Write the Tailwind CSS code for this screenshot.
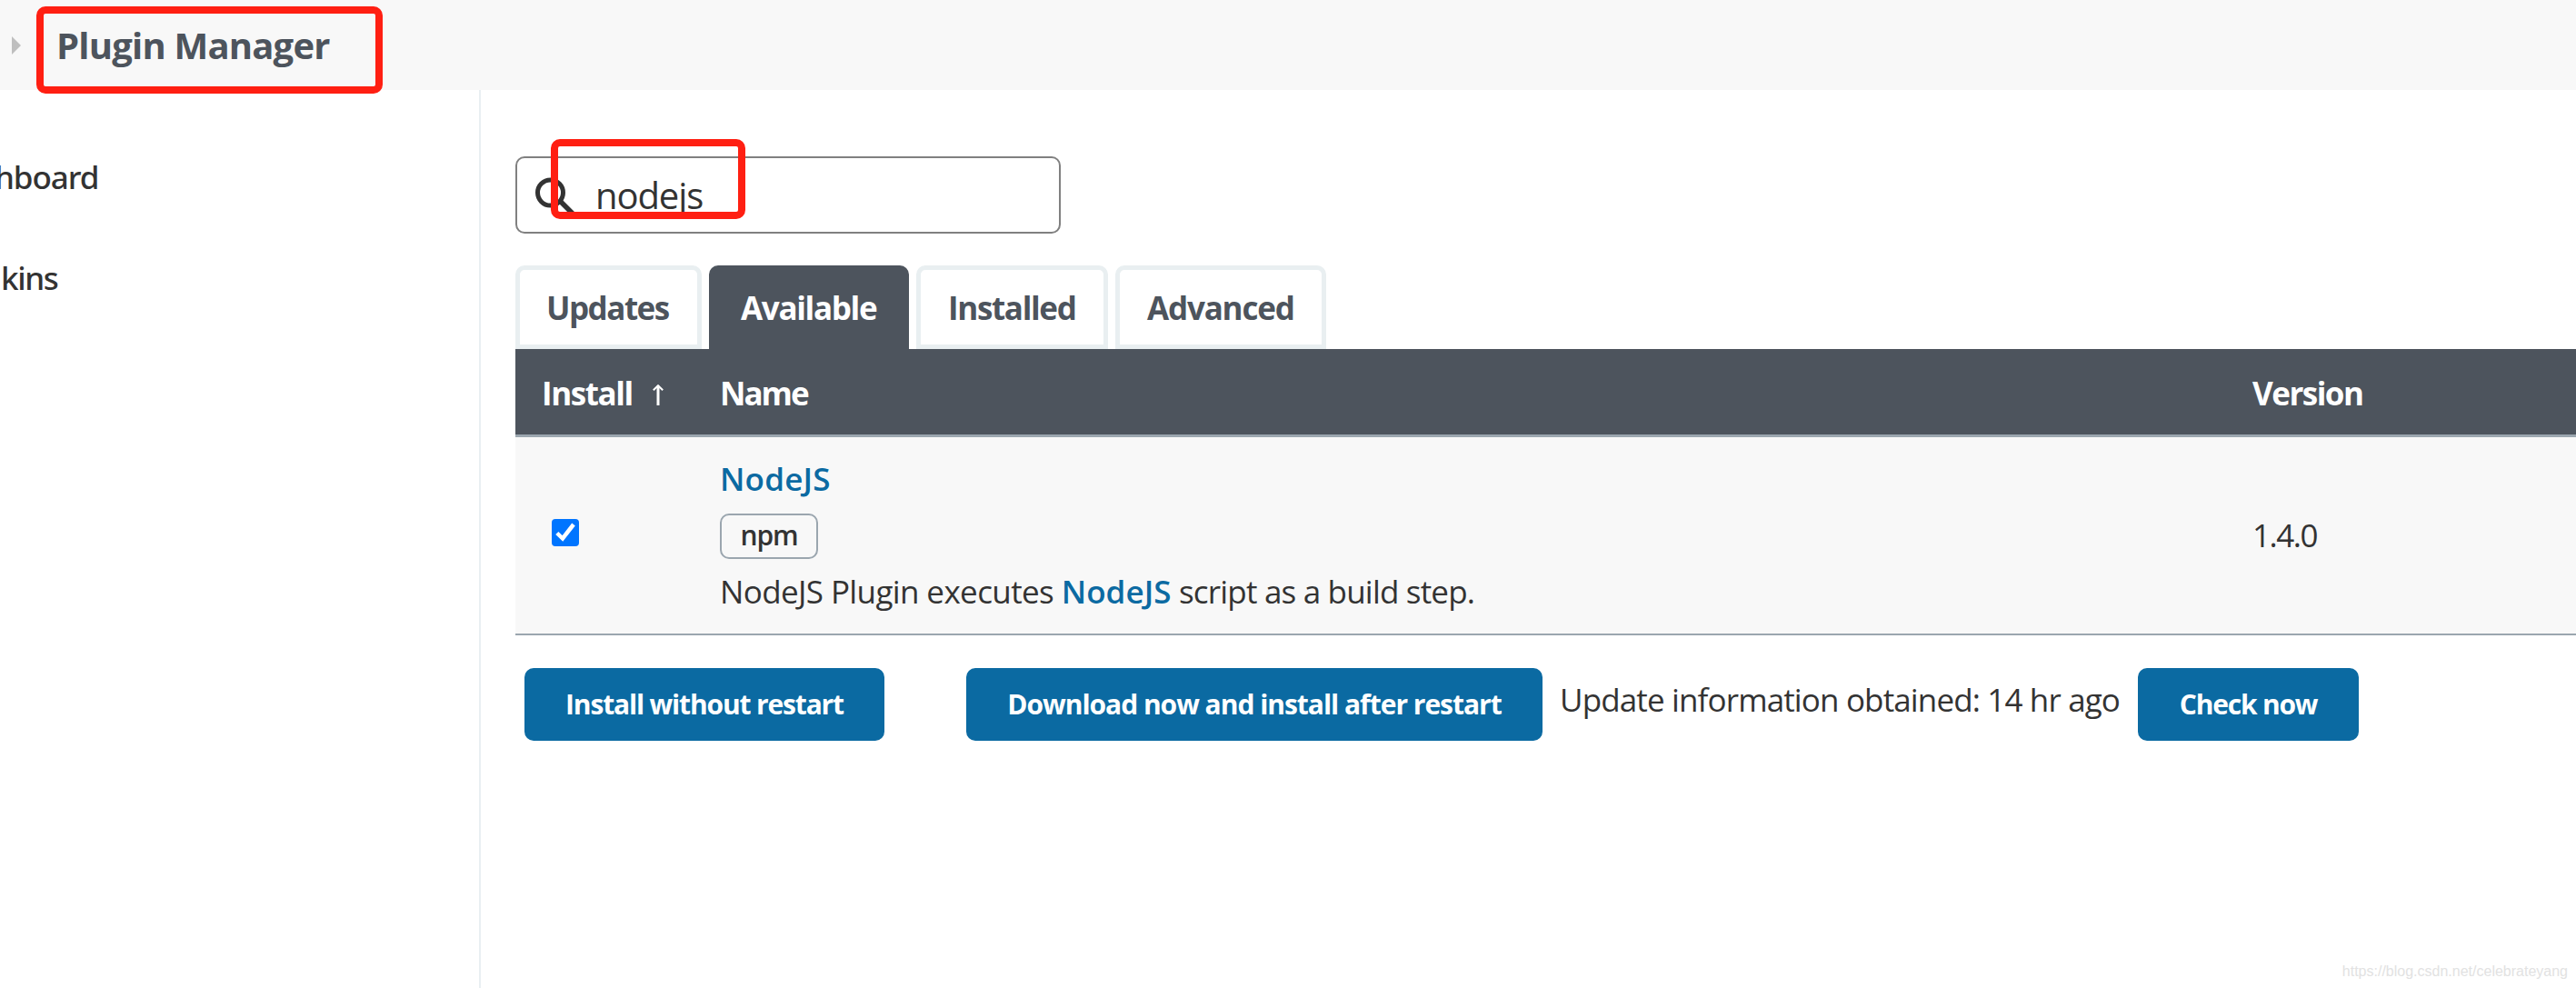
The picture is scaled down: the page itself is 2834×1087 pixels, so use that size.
<!DOCTYPE html>
<html lang="en">
<head>
<meta charset="utf-8">
<title>Plugin Manager</title>
<script src="https://cdn.jsdelivr.net/npm/@tailwindcss/browser@4"></script>
</head>
<body class="relative flex h-[1087px] w-[2834px] flex-col overflow-hidden bg-white font-['Open_Sans','Noto_Sans',sans-serif] text-[35px] leading-[48px] font-normal whitespace-nowrap text-[#333]">
  <header class="flex h-[99px] shrink-0 items-center bg-[#f8f8f8] pl-[13px]">
    <svg class="h-5 w-2.5" viewBox="0 0 10 20" fill="#bfbfbf"><path d="M0 0l10 10L0 20z"/></svg>
    <h1 class="ml-[39px] text-[40px] font-bold tracking-[-0.8px] text-[#4d545d]">Plugin Manager</h1>
  </header>

  <div class="flex min-h-0 flex-1">
    <nav class="flex w-[529px] shrink-0 flex-col gap-[63px] overflow-hidden border-r-2 border-[#e9eff2] pt-[72px] font-['Noto_Sans',sans-serif] font-medium">
      <a class="-ml-[6px] tracking-[-1.1px]">hboard</a>
      <a class="ml-[1px] tracking-[-1.4px]">kins</a>
    </nav>

    <main class="flex min-w-0 flex-1 flex-col pl-[38px]">
      <div class="mt-[73px] flex h-[85px] w-[600px] shrink-0 items-center rounded-[10px] border-2 border-[#808080] pl-5">
        <svg class="h-[46px] w-[46px]" viewBox="0 0 46 46" fill="none" stroke="#333"><circle cx="16.5" cy="20" r="14" stroke-width="5"/><path d="M27.5 29.5L41 43" stroke-width="5.5"/></svg>
        <span class="ml-5 text-[40px] leading-[54px] tracking-[-1.1px]">nodejs</span>
      </div>

      <div class="mt-[35px] flex h-[92px] shrink-0 gap-2 leading-[84px] font-bold text-[#4d545d]">
        <div class="w-[205px] rounded-t-[10px] border-5 border-[#e9eff1] pl-[29px] tracking-[-1.5px]">Updates</div>
        <div class="w-[220px] rounded-t-[10px] border-5 border-[#4d545d] bg-[#4d545d] pl-[30px] tracking-[-1.32px] text-white">Available</div>
        <div class="w-[211px] rounded-t-[10px] border-5 border-[#e9eff1] pl-[30px] tracking-[-1.33px]">Installed</div>
        <div class="w-[232px] rounded-t-[10px] border-5 border-[#e9eff1] pl-[30px] tracking-[-1.19px]">Advanced</div>
      </div>

      <div class="grid h-[97px] shrink-0 grid-cols-[225px_1686px_1fr] items-center border-b-3 border-[#9ba6af] bg-[#4d545d] pt-1 font-bold text-white">
        <div class="flex items-center pl-[29px]">
          <span class="tracking-[-1.4px]">Install</span>
          <svg class="ml-[22px] mt-[3px] h-[23px] w-3" viewBox="0 0 12 23" fill="none" stroke="#fff"><path d="M6 23V1.500" stroke-width="3"/><path d="M.8 6.300L6 1.200l5.200 5.100" stroke-width="2"/></svg>
        </div>
        <div class="tracking-[-2px]">Name</div>
        <div class="tracking-[-1.51px]">Version</div>
      </div>

      <div class="grid h-[218px] shrink-0 grid-cols-[225px_1686px_1fr] items-center border-b-2 border-[#9ba6af] bg-[#f8f8f8]">
        <div class="-mt-[6px] pl-10">
          <svg class="h-[30px] w-[30px]" viewBox="0 0 30 30"><rect width="30" height="30" rx="4" fill="#0075ff"/><path d="M5.800 15.500L12 21.500L24 6" fill="none" stroke="#fff" stroke-width="4.500"/></svg>
        </div>
        <div class="flex h-[216px] flex-col items-start pt-[22px]">
          <a class="font-semibold tracking-[0.2px] text-[#0b6aa2]">NodeJS</a>
          <span class="mt-3.5 flex h-[50px] w-[108px] items-center justify-center rounded-[10px] border-2 border-[#9ba6af] pb-0.5 text-[30px] font-semibold tracking-[-1.2px]">npm</span>
          <p class="mt-3"><span class="tracking-[-0.61px]">NodeJS Plugin executes </span><a class="font-semibold tracking-[0.1px] text-[#0b6aa2]">NodeJS</a><span class="tracking-[-0.81px]"> script as a build step.</span></p>
        </div>
        <div class="tracking-[-1.5px]">1.4.0</div>
      </div>

      <div class="mt-9 flex h-20 shrink-0 items-center pl-2.5">
        <button class="h-20 w-[396px] rounded-[10px] bg-[#0b6aa2] text-[30px] font-bold tracking-[-1.16px] text-white">Install without restart</button>
        <button class="ml-[90px] h-20 w-[634px] rounded-[10px] bg-[#0b6aa2] text-[30px] font-bold tracking-[-1.02px] text-white">Download now and install after restart</button>
        <span class="mb-2.5 ml-[19px] w-[636px] tracking-[-0.86px]">Update information obtained: 14 hr ago</span>
        <button class="h-20 w-[243px] rounded-[10px] bg-[#0b6aa2] text-[30px] font-bold tracking-[-1.2px] text-white">Check now</button>
      </div>
    </main>
  </div>

  <!-- highlight frames -->
  <div class="absolute top-[7px] left-[40px] h-[96px] w-[381px] rounded-[10px] border-8 border-[#ff1f12]"></div>
  <div class="absolute top-[153px] left-[606px] h-[88px] w-[214px] rounded-[10px] border-8 border-[#ff1f12]"></div>
  <div class="absolute right-[9px] bottom-[6px] font-['Liberation_Sans',sans-serif] text-[16px] leading-[24px] text-[#e2e2e2]">https://blog.csdn.net/celebrateyang</div>
</body>
</html>
